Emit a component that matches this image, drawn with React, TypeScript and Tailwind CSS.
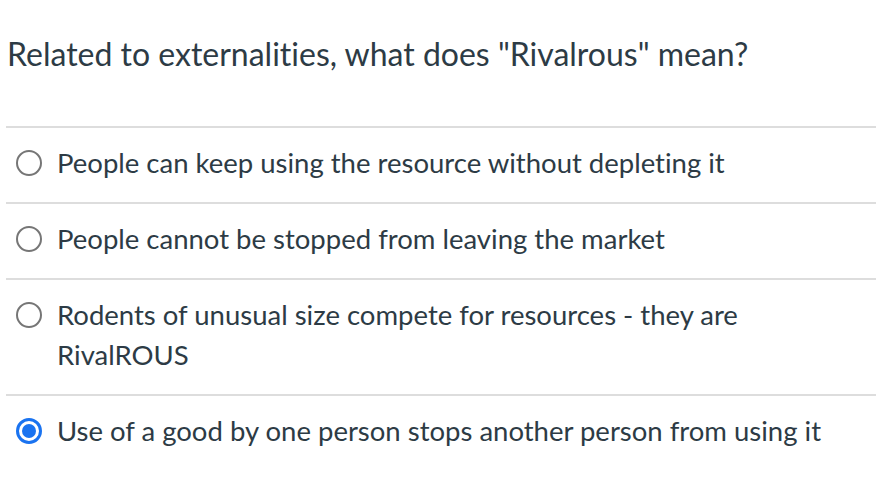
const answers = [
  { id: 'a', text: 'People can keep using the resource without depleting it', selected: false },
  { id: 'b', text: 'People cannot be stopped from leaving the market', selected: false },
  { id: 'c', text: 'Rodents of unusual size compete for resources - they are RivalROUS', selected: false },
  { id: 'd', text: 'Use of a good by one person stops another person from using it', selected: true },
]

function Radio({ selected }: { selected: boolean }) {
  if (selected) {
    return (
      <span className="mt-[7px] flex h-[26px] w-[26px] shrink-0 items-center justify-center rounded-full border-[3px] border-[#1a73f0] bg-white">
        <span className="h-[14px] w-[14px] rounded-full bg-[#1a73f0]" />
      </span>
    )
  }
  return <span className="mt-[7px] h-[26px] w-[26px] shrink-0 rounded-full border-2 border-[#767676] bg-white" />
}

export default function App() {
  return (
    <div className="min-h-screen bg-white font-['Lato','Noto_Sans',sans-serif] text-[#2d3b45] [font-variant-ligatures:none]">
      <h2 className="pl-[7px] pt-[32px] text-[32px] leading-[44px] font-normal">
        Related to externalities, what does "Rivalrous" mean?
      </h2>
      <div className="ml-[6px] mt-[50px]">
        {answers.map((a) => (
          <label
            key={a.id}
            className="flex items-start gap-[15px] border-t-2 border-[#dddddd] pt-[15px] pb-[19px] pl-[10px] text-[27.5px] leading-[40px]"
          >
            <Radio selected={a.selected} />
            <span className="flex-1 pr-[4px]">{a.text}</span>
          </label>
        ))}
      </div>
    </div>
  )
}
